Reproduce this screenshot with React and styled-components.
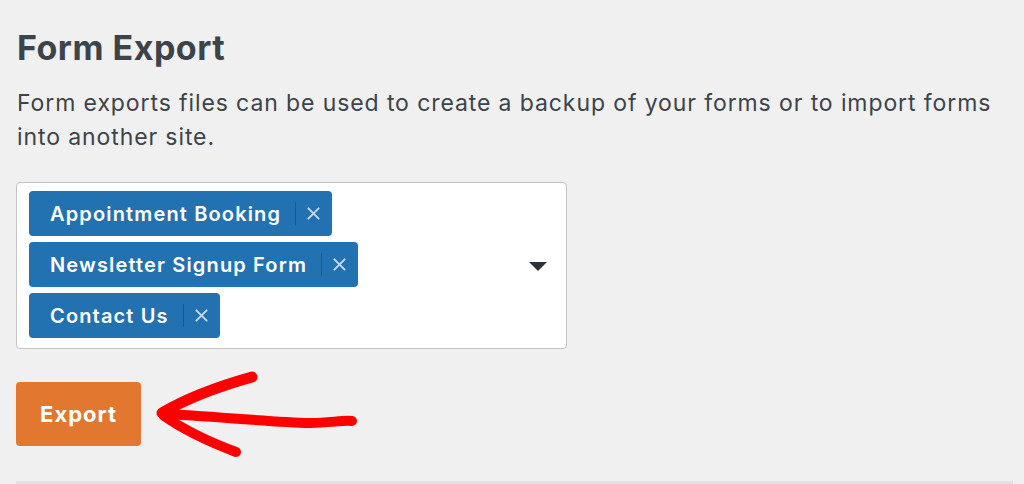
import React from "react";
import styled, { createGlobalStyle } from "styled-components";

const Global = createGlobalStyle`
  html, body { margin: 0; padding: 0; background: #f0f0f1; }
  body { font-family: Inter, "Noto Sans", "Liberation Sans", sans-serif; color: #3c434a; }
`;

const Page = styled.div`
  width: 997px;
  padding: 0 0 0 16px;
  height: 484px;
  display: flex;
  flex-direction: column;
  overflow: hidden;
`;

const Title = styled.h1`
  margin: 26px 0 0 1px;
  font-size: 34px;
  line-height: 44px;
  font-weight: 700;
  letter-spacing: 0.5px;
  color: #3c434a;
`;

const Description = styled.p`
  margin: 16px 0 0 1px;
  font-size: 23px;
  line-height: 34px;
  font-weight: 400;
  letter-spacing: 0.9px;
  color: #3c434a;
  white-space: nowrap;
`;

const Select = styled.div`
  margin-top: 28px;
  width: 551px;
  height: 167px;
  box-sizing: border-box;
  background: #fff;
  border: 1px solid #c3c4c7;
  border-radius: 4px;
  padding: 8px 12px;
  display: flex;
  align-items: center;
  justify-content: space-between;
`;

const TagList = styled.div`
  display: flex;
  flex-direction: column;
  align-items: flex-start;
  gap: 6px;
  align-self: flex-start;
`;

const Tag = styled.div`
  display: flex;
  align-items: center;
  height: 45px;
  background: #2271b1;
  border-radius: 4px;
  color: #fff;
  font-size: 20px;
  font-weight: 600;
  letter-spacing: 1.15px;
  padding: 0 11px 0 21px;
`;

const TagLabel = styled.span`
  white-space: nowrap;
`;

const Divider = styled.span`
  width: 1px;
  height: 23px;
  background: #1a5a8f;
  margin: 0 10px 0 14px;
`;

const Remove = styled.svg`
  width: 15px;
  height: 15px;
  display: block;
`;

const Caret = styled.span`
  width: 0;
  height: 0;
  border-left: 9px solid transparent;
  border-right: 9px solid transparent;
  border-top: 9px solid #2c3338;
  margin-right: 7px;
  margin-top: 2px;
`;

const ButtonRow = styled.div`
  position: relative;
  margin-top: 33px;
  display: flex;
`;

const ExportButton = styled.button`
  width: 125px;
  height: 64px;
  border: none;
  border-radius: 4px;
  background: #e27730;
  color: #fff;
  font-family: Inter, "Noto Sans", "Liberation Sans", sans-serif;
  font-size: 22px;
  font-weight: 700;
  letter-spacing: 1px;
  cursor: pointer;
`;

const Annotation = styled.svg`
  position: absolute;
  left: 136px;
  top: -16px;
  width: 230px;
  height: 100px;
  pointer-events: none;
`;

const Rule = styled.div`
  margin-top: auto;
  height: 3px;
  background: #e2e2e3;
`;

const forms = ["Appointment Booking", "Newsletter Signup Form", "Contact Us"];

export default function App() {
  return (
    <>
      <Global />
      <Page>
        <Title>Form Export</Title>
        <Description>
          Form exports files can be used to create a backup of your forms or to import forms
          <br />
          into another site.
        </Description>
        <Select>
          <TagList>
            {forms.map((f) => (
              <Tag key={f}>
                <TagLabel>{f}</TagLabel>
                <Divider />
                <Remove viewBox="0 0 16 16">
                  <path d="M2.5 2.5 L13.5 13.5 M13.5 2.5 L2.5 13.5" stroke="#c8d9ec" strokeWidth="2" strokeLinecap="round" />
                </Remove>
              </Tag>
            ))}
          </TagList>
          <Caret />
        </Select>
        <ButtonRow>
          <ExportButton>Export</ExportButton>
          <Annotation viewBox="0 0 230 100">
            <g fill="none" stroke="#ff0000" strokeLinecap="round" strokeLinejoin="round">
              <path d="M11 48 C 60 50, 115 56, 158 57 C 178 57, 190 54, 200 55" strokeWidth="10" />
              <path d="M10 47 C 35 32, 68 20, 100 11" strokeWidth="11" />
              <path d="M12 50 C 35 66, 60 77, 84 86" strokeWidth="10" />
            </g>
          </Annotation>
        </ButtonRow>
        <Rule />
      </Page>
    </>
  );
}
